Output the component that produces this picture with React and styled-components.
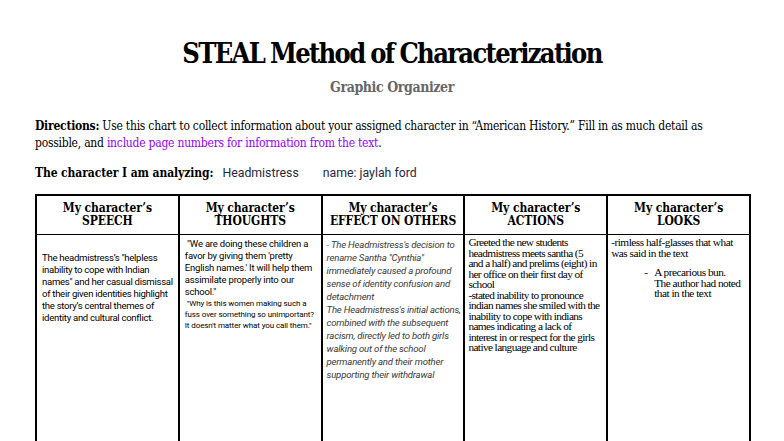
import React from "react";
import styled, { createGlobalStyle } from "styled-components";

const Global = createGlobalStyle`
  html, body { margin: 0; padding: 0; background: #fff; }
  body { font-family: "Liberation Serif", serif; color: #000; overflow: hidden; }
`;

const SERIF = '"DejaVu Serif Condensed", "DejaVu Serif", serif';

const Page = styled.div`
  width: 784px;
  height: 441px;
  box-sizing: border-box;
  padding: 38px 35px 0 35px;
  display: flex;
  flex-direction: column;
  overflow: hidden;
`;

const Title = styled.h1`
  margin: 0;
  text-align: center;
  font-family: ${SERIF};
  font-weight: 900;
  font-size: 27px;
  line-height: 32px;
  letter-spacing: -1.65px;
  word-spacing: -1px;
  color: #000;
`;

const Subtitle = styled.h2`
  margin: 8px 0 0 0;
  text-align: center;
  font-family: ${SERIF};
  font-weight: 700;
  font-size: 14px;
  line-height: 18px;
  letter-spacing: -0.4px;
  color: #666;
`;

const Directions = styled.p`
  margin: 22px 0 0 0;
  font-family: ${SERIF};
  font-size: 12px;
  line-height: 17px;
  letter-spacing: -0.24px;
  color: #000;
`;

const Strong = styled.b`
  font-weight: 700;
`;

const Purple = styled.span`
  color: #9900ff;
`;

const CharLine = styled.div`
  margin-top: 14px;
  display: flex;
  align-items: baseline;
  font-family: ${SERIF};
  font-size: 12px;
  font-weight: 700;
  letter-spacing: -0.1px;
`;

const Answer = styled.span`
  font-family: Roboto, "Liberation Sans", sans-serif;
  font-weight: 400;
  font-size: 12.3px;
  color: #1f2a44;
  letter-spacing: 0;
  margin-left: ${(p) => p.$gap || 6}px;
`;

const Table = styled.div`
  margin-top: 14px;
  width: 714px;
  display: grid;
  grid-template-columns: repeat(5, minmax(0, 1fr));
  grid-template-rows: 39px 220px;
  border-top: 2px solid #000;
  border-left: 2px solid #000;
`;

const HeadCell = styled.div`
  border-right: 2px solid #000;
  border-bottom: 1px solid #000;
  display: flex;
  flex-direction: column;
  align-items: center;
  justify-content: center;
  font-family: ${SERIF};
  font-weight: 700;
  font-size: 12px;
  line-height: 13.5px;
  letter-spacing: -0.1px;
  text-align: center;
  white-space: nowrap;
`;

const BodyCell = styled.div`
  min-width: 0;
  overflow: hidden;
  border-right: 2px solid #000;
  padding: ${(p) => p.$pt || 4}px 2px 0 ${(p) => p.$pl || 5}px;
  font-family: ${(p) =>
    p.$serif ? '"Liberation Serif", serif' : 'Roboto, "Liberation Sans", sans-serif'};
  font-style: ${(p) => (p.$italic ? "italic" : "normal")};
  color: ${(p) => p.$color || "#000"};
  font-size: ${(p) => p.$size || 9.5}px;
  line-height: ${(p) => p.$lh || 12}px;
  letter-spacing: ${(p) => p.$ls || 0}px;
`;

const Line = styled.div`
  white-space: nowrap;
`;

const Small = styled.div`
  font-size: 8px;
  line-height: 11px;
  letter-spacing: -0.1px;
`;

const Bullet = styled.div`
  display: flex;
  margin-top: 9px;
  padding-left: 33px;
`;

const Dash = styled.span`
  width: 10px;
  flex: none;
`;

const headers = ["SPEECH", "THOUGHTS", "EFFECT ON OTHERS", "ACTIONS", "LOOKS"];

const effectLines = [
  "- The Headmistress's decision to",
  'rename Santha "Cynthia"',
  "immediately caused a profound",
  "sense of identity confusion and",
  "detachment",
  "The Headmistress's initial actions,",
  "combined with the subsequent",
  "racism, directly led to both girls",
  "walking out of the school",
  "permanently and their mother",
  "supporting their withdrawal",
];

const actionLines = [
  "Greeted the new students",
  "headmistress meets santha (5",
  "and a half) and prelims (eight) in",
  "her office on their first day of",
  "school",
  "-stated inability to pronounce",
  "indian names she smiled with the",
  "inability to cope with indians",
  "names indicating a lack of",
  "interest in or respect for the girls",
  "native language and culture",
];

export default function App() {
  return (
    <>
      <Global />
      <Page>
        <Title>STEAL Method of Characterization</Title>
        <Subtitle>Graphic Organizer</Subtitle>
        <Directions>
          <Strong>Directions:</Strong> Use this chart to collect information about your assigned
          character in “American History.” Fill in as much detail as
          <br />
          possible, and <Purple>include page numbers for information from the text</Purple>.
        </Directions>
        <CharLine>
          The character I am analyzing:
          <Answer $gap={9}>Headmistress</Answer>
          <Answer $gap={24}>name: jaylah ford</Answer>
        </CharLine>
        <Table>
          {headers.map((h) => (
            <HeadCell key={h}>
              <span>My character’s</span>
              <span>{h}</span>
            </HeadCell>
          ))}
          <BodyCell $pt={17} $size={9.6} $lh={12} $ls={-0.3}>
            The headmistress’s "helpless inability to cope with Indian names" and her casual
            dismissal of their given identities highlight the story’s central themes of identity
            and cultural conflict.
          </BodyCell>
          <BodyCell $pt={3} $size={9.5} $lh={12} $ls={-0.2}>
            &nbsp;"We are doing these children a favor by giving them 'pretty English names.' It
            will help them assimilate properly into our school."
            <Small>
              &nbsp;"Why is this women making such a fuss over something so unimportant? It doesn't
              matter what you call them."
            </Small>
          </BodyCell>
          <BodyCell $pt={3} $pl={4} $italic $color="#3a3a3a" $size={9.6} $lh={13} $ls={-0.2}>
            {effectLines.map((l, i) => (
              <Line key={i}>{l}</Line>
            ))}
          </BodyCell>
          <BodyCell $pt={2} $pl={3} $serif $size={11.3} $lh={10.5} $ls={-0.6}>
            {actionLines.map((l, i) => (
              <Line key={i}>{l}</Line>
            ))}
          </BodyCell>
          <BodyCell $pt={2} $pl={3} $serif $size={11.3} $lh={10.5} $ls={-0.5}>
            -rimless half-glasses that what was said in the text
            <Bullet>
              <Dash>-</Dash>
              <span>
                A precarious bun.
                <br />
                The author had noted that in the text
              </span>
            </Bullet>
          </BodyCell>
        </Table>
      </Page>
    </>
  );
}
